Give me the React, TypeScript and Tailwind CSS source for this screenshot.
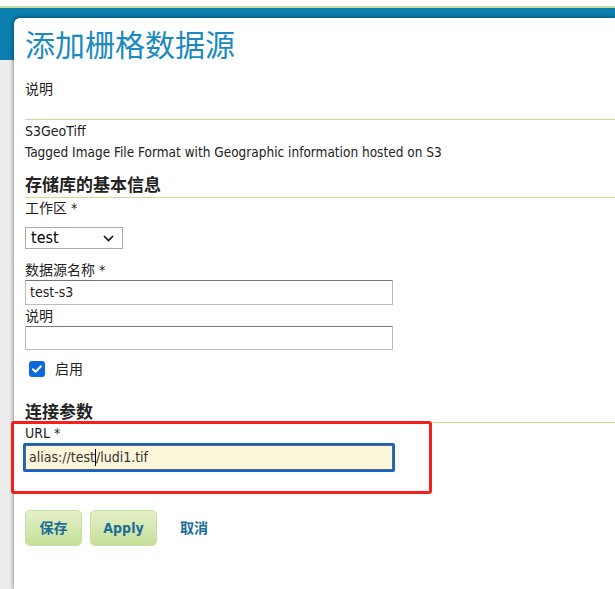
import React from "react";

const FONT = '"DejaVu Sans Condensed", "DejaVu Sans", "Noto Sans CJK SC", sans-serif';

function Label({ children }: { children: React.ReactNode }) {
  return <div className="h-[18px] leading-[18px] text-[14px] text-[#222]">{children}</div>;
}

export default function App() {
  return (
    <div className="min-h-[589px] w-[615px] overflow-hidden bg-white" style={{ fontFamily: FONT }}>
      <div className="h-[6px] bg-white" />
      <div className="h-[2px] bg-[#c5de9a]" />
      <div className="h-[52px] bg-[#0a7fb0]" />
      <div className="flex min-h-[529px] bg-[#ededed]">
        <div className="w-[14px] shrink-0" />
        <div className="-mt-[42px] flex-1 rounded-tl-[6px] bg-white pl-[11px] pt-[8px] shadow-[0_0_5px_rgba(0,0,0,0.55)]">
          <h1 className="h-[40px] leading-[40px] text-[30px] font-normal text-[#1a8ac0]">添加栅格数据源</h1>
          <div className="mt-[14px]">
            <Label>说明</Label>
          </div>
          <div className="mt-[21px] border-t border-[#c5de9a]" />
          <div className="mt-[2px] h-[18px] leading-[18px] text-[14px] text-[#222]">S3GeoTiff</div>
          <div className="mt-[3px] h-[18px] leading-[18px] text-[13.5px] text-[#222]">
            Tagged Image File Format with Geographic information hosted on S3
          </div>
          <h3 className="mt-[13px] h-[24px] border-b border-[#c5de9a] text-[17px] font-bold leading-[22px] text-[#222]">
            存储库的基本信息
          </h3>
          <div className="mt-[1px]">
            <Label>工作区 *</Label>
          </div>
          <div className="mt-[10px] flex h-[22px] w-[98px] items-center justify-between border border-[#aaa] bg-white pl-[5px] pr-[8px] text-[16px] text-black">
            <span>test</span>
            <svg width="11" height="7" viewBox="0 0 11 7">
              <path d="M1 1l4.5 4.5L10 1" fill="none" stroke="#111" strokeWidth="1.6" />
            </svg>
          </div>
          <div className="mt-[12px]">
            <Label>数据源名称 *</Label>
          </div>
          <div className="mt-[1px] flex h-[25px] w-[368px] items-center border border-[#bbb] border-t-[#777] pl-[4px] text-[14px] text-[#222]">
            test-s3
          </div>
          <div className="mt-[2px]">
            <Label>说明</Label>
          </div>
          <div className="mt-[1px] h-[24px] w-[368px] border border-[#bbb] border-t-[#777]" />
          <div className="mt-[10px] flex items-center">
            <div className="ml-[4px] flex h-[16px] w-[16px] items-center justify-center rounded-[3px] bg-[#0b6bdc]">
              <svg width="12" height="12" viewBox="0 0 12 12">
                <path d="M2 6.2l2.6 2.6L10 3.2" fill="none" stroke="#fff" strokeWidth="2" strokeLinecap="round" strokeLinejoin="round" />
              </svg>
            </div>
            <span className="ml-[10px] text-[14px] leading-[18px] text-[#222]">启用</span>
          </div>
          <h3 className="mt-[23px] h-[22px] border-b border-[#c5de9a] text-[17px] font-bold leading-[22px] text-[#222]">
            连接参数
          </h3>
          <div className="-ml-[14px] -mt-[2px] h-[73px] w-[421px] rounded-[3px] border-[3px] border-[#f5201b] pl-[11px] pt-[0px]">
            <Label>URL *</Label>
            <div className="-ml-[2px] mt-[1px] flex h-[29px] w-[372px] items-center rounded-[2px] border-2 border-[#0c62d8] bg-[#fcf6da]">
              <div className="flex h-full w-full items-center border border-[#666] pl-[3px] text-[14px] text-[#333]">
                <span>alias://test</span>
                <span className="inline-block h-[17px] w-[1px] bg-black" />
                <span>/ludi1.tif</span>
              </div>
            </div>
          </div>
          <div className="mt-[16px] flex items-center gap-[8px]">
            <button className="h-[36px] w-[57px] rounded-[5px] border border-[#c8df9f] bg-gradient-to-b from-[#e4f0c8] to-[#c6e09a] text-[14px] font-bold text-[#1b6d98]">
              保存
            </button>
            <button className="h-[36px] w-[67px] rounded-[5px] border border-[#c8df9f] bg-gradient-to-b from-[#e4f0c8] to-[#c6e09a] text-[14px] font-bold text-[#1b6d98]">
              Apply
            </button>
            <span className="ml-[15px] text-[14px] font-bold text-[#1b6d98]">取消</span>
          </div>
        </div>
      </div>
    </div>
  );
}
